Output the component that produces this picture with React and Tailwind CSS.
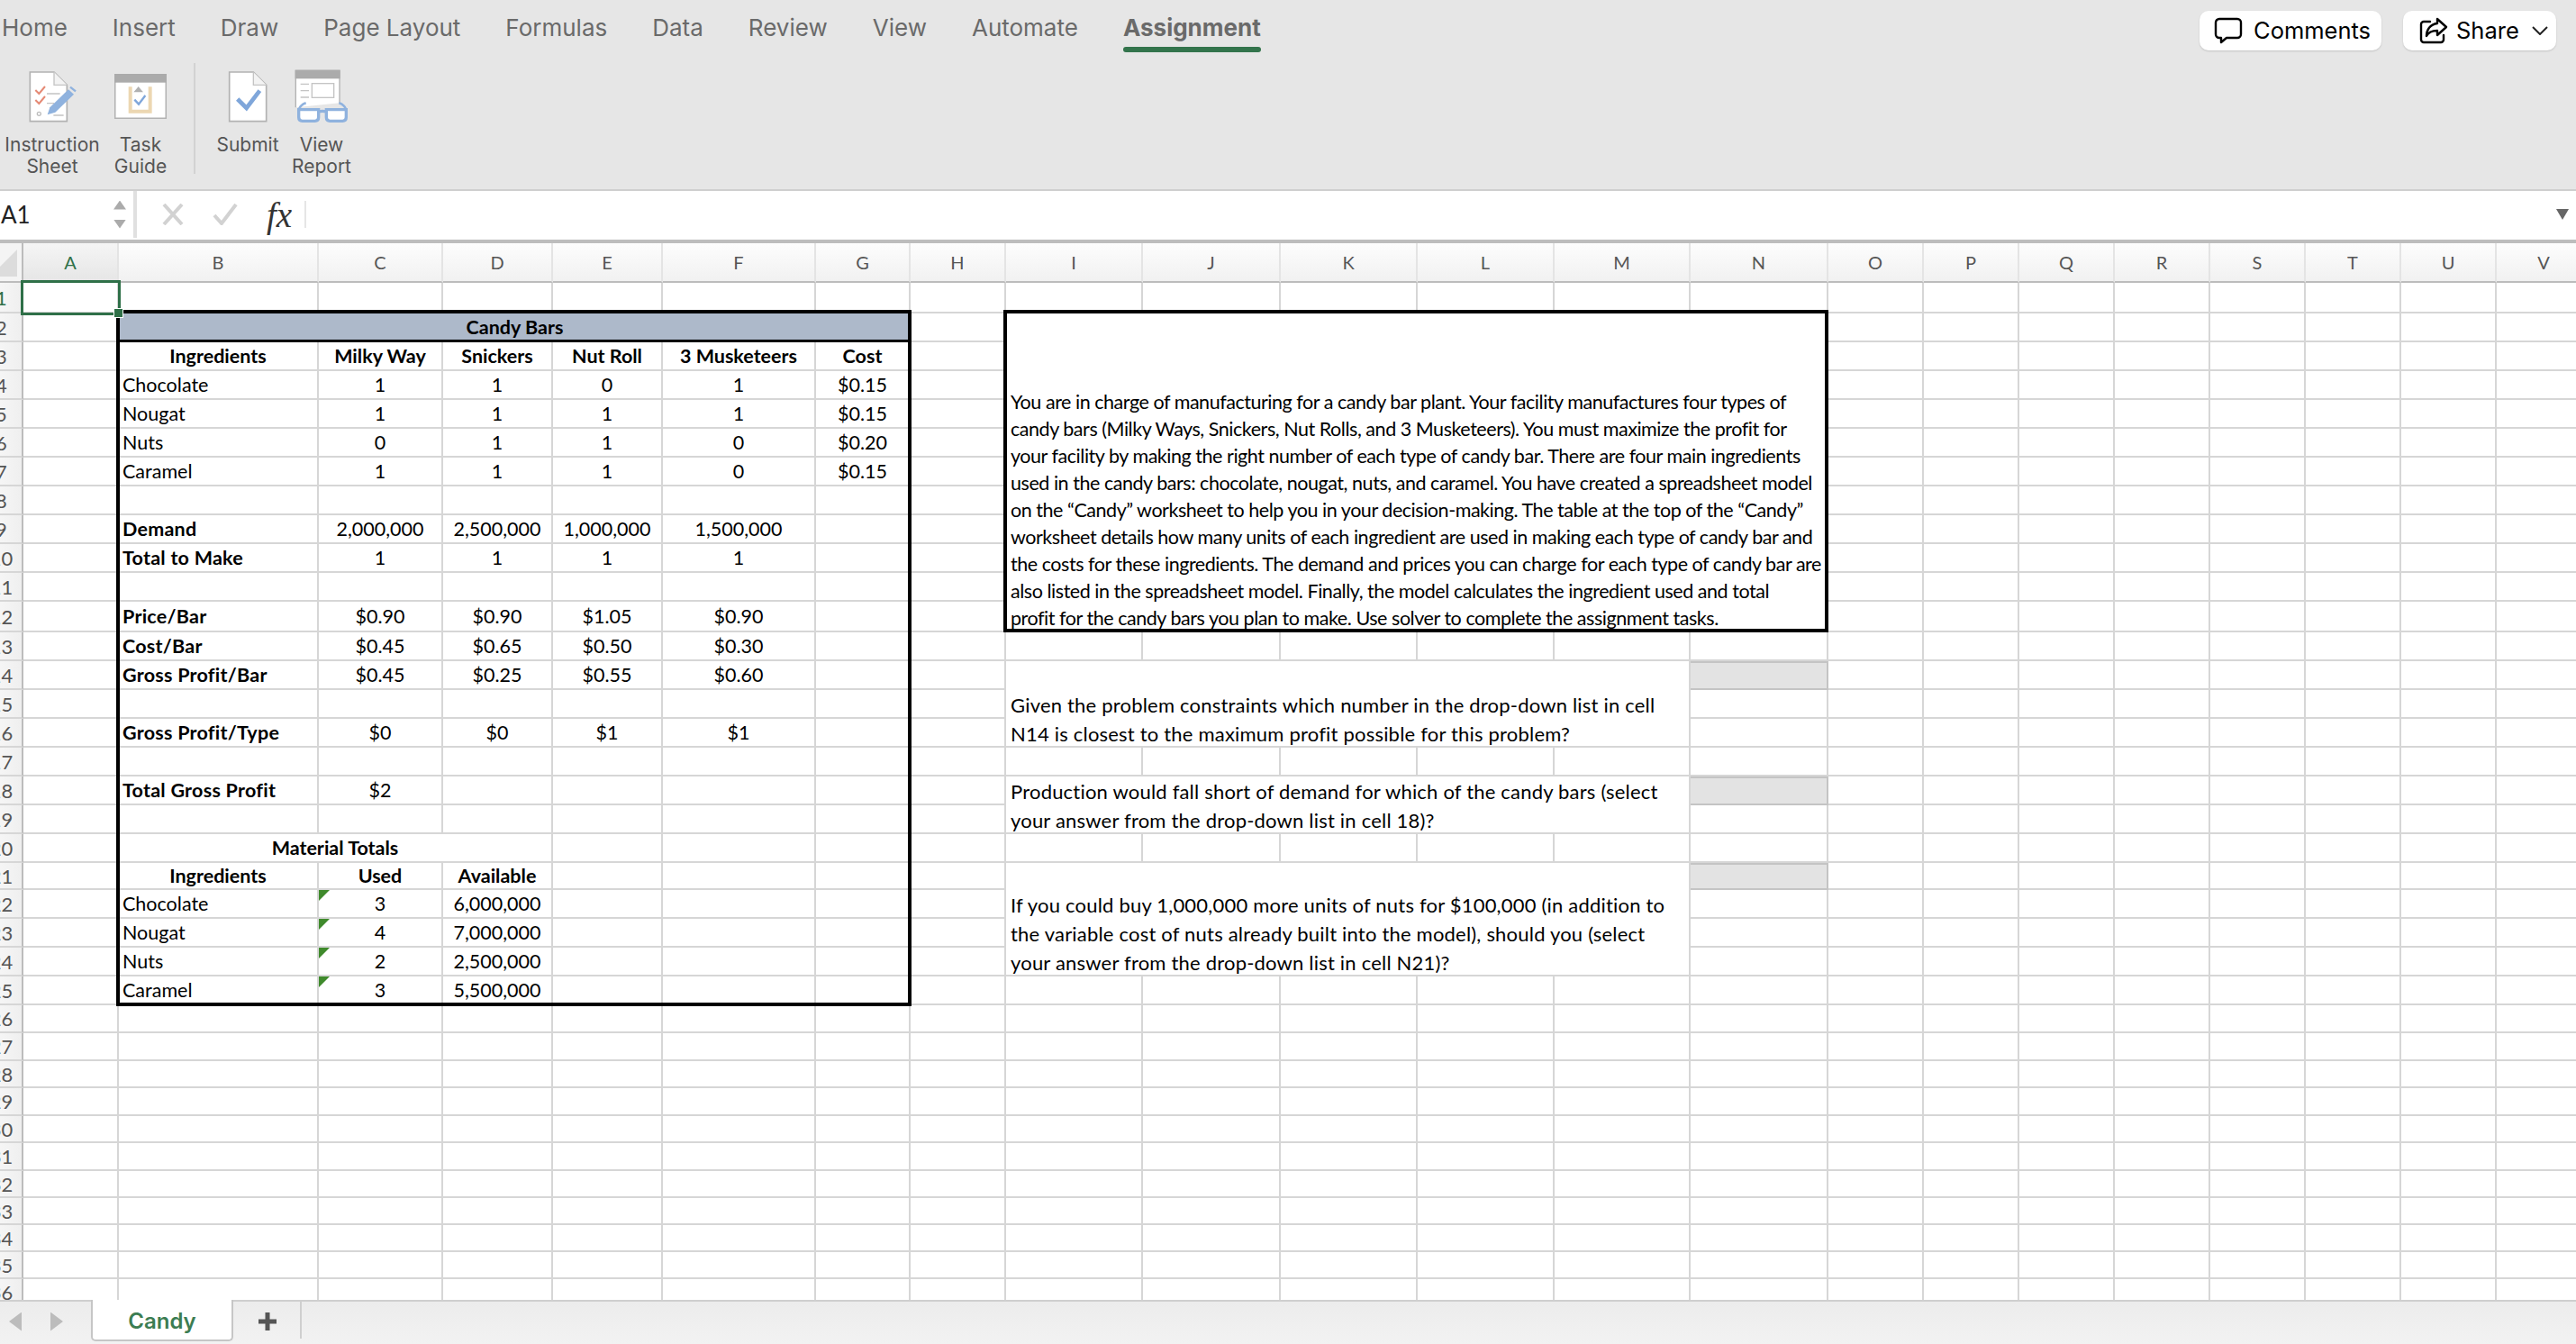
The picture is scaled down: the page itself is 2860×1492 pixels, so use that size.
import React from "react";

const cellFont = "font-['Lato',sans-serif]";
const uiFont = "font-['Inter',sans-serif]";

// column widths and row heights measured off the sheet
const sheetGrid =
  "grid grid-cols-[47px_106px_222px_138px_122px_122px_170px_105px_106px_152px_153px_152px_152px_151px_153px_106px_106px_106px_106px_106px_106px_106px_106px] grid-rows-[44px_34px_repeat(10,32px)_34px_repeat(8,32px)_30px_repeat(4,32px)_31px_31px_30px_31px_30px_31px_repeat(5,30px)]";

const columns = ["A", "B", "C", "D", "E", "F", "G", "H", "I", "J", "K", "L", "M", "N", "O", "P", "Q", "R", "S", "T", "U", "V"];

const tabs = ["Home", "Insert", "Draw", "Page Layout", "Formulas", "Data", "Review", "View", "Automate"];

const tableRows = {
  3: { head: true, cells: ["Ingredients", "Milky Way", "Snickers", "Nut Roll", "3 Musketeers", "Cost"] },
  4: { cells: ["Chocolate", "1", "1", "0", "1", "$0.15"] },
  5: { cells: ["Nougat", "1", "1", "1", "1", "$0.15"] },
  6: { cells: ["Nuts", "0", "1", "1", "0", "$0.20"] },
  7: { cells: ["Caramel", "1", "1", "1", "0", "$0.15"] },
  9: { bold: true, cells: ["Demand", "2,000,000", "2,500,000", "1,000,000", "1,500,000"] },
  10: { bold: true, cells: ["Total to Make", "1", "1", "1", "1"] },
  12: { bold: true, cells: ["Price/Bar", "$0.90", "$0.90", "$1.05", "$0.90"] },
  13: { bold: true, cells: ["Cost/Bar", "$0.45", "$0.65", "$0.50", "$0.30"] },
  14: { bold: true, cells: ["Gross Profit/Bar", "$0.45", "$0.25", "$0.55", "$0.60"] },
  16: { bold: true, cells: ["Gross Profit/Type", "$0", "$0", "$1", "$1"] },
  18: { bold: true, cells: ["Total Gross Profit", "$2"] },
  21: { head: true, cells: ["Ingredients", "Used", "Available"] },
  22: { flag: true, cells: ["Chocolate", "3", "6,000,000"] },
  23: { flag: true, cells: ["Nougat", "4", "7,000,000"] },
  24: { flag: true, cells: ["Nuts", "2", "2,500,000"] },
  25: { flag: true, cells: ["Caramel", "3", "5,500,000"] },
};

const infoLines = [
  "You are in charge of manufacturing for a candy bar plant. Your facility manufactures four types of",
  "candy bars (Milky Ways, Snickers, Nut Rolls, and 3 Musketeers). You must maximize the profit for",
  "your facility by making the right number of each type of candy bar. There are four main ingredients",
  "used in the candy bars: chocolate, nougat, nuts, and caramel. You have created a spreadsheet model",
  "on the “Candy” worksheet to help you in your decision-making. The table at the top of the “Candy”",
  "worksheet details how many units of each ingredient are used in making each type of candy bar and",
  "the costs for these ingredients. The demand and prices you can charge for each type of candy bar are",
  "also listed in the spreadsheet model. Finally, the model calculates the ingredient used and total",
  "profit for the candy bars you plan to make. Use solver to complete the assignment tasks.",
];

const InstructionIcon = () => (
  <svg width="56" height="58" viewBox="100 56 168 174" fill="none">
    <path d="M110 62H190L233 105V226H110Z" fill="#fff" stroke="#b2b2b2" strokeWidth="5" />
    <path d="M190 62V105H233" fill="#f3f3f3" stroke="#c4c4c4" strokeWidth="4" />
    <path d="M128 122l12 12 20-24M128 155l12 12 20-24" stroke="#e58a75" strokeWidth="6" />
    <path d="M166 134H210M166 166H190M188 206H222" stroke="#c4c4c4" strokeWidth="4" />
    <circle cx="140" cy="201" r="6" stroke="#bdbdbd" strokeWidth="4" />
    <path d="M168 204l8-24 62-60 18 16-62 60z" fill="#8fb2de" />
    <path d="M244 112l18 14" stroke="#8fb2de" strokeWidth="7" />
  </svg>
);

const TaskIcon = () => (
  <svg width="58" height="50" viewBox="388 72 174 150" fill="none">
    <rect x="390" y="74" width="170" height="146" fill="#fff" stroke="#b2b2b2" strokeWidth="5" />
    <rect x="388" y="72" width="174" height="29" fill="#ababab" />
    <path d="M435 115h12v76h54v-76h12v88h-78z" fill="#ecd7b2" />
    <path d="M452 133l8-9 8-10 8 10 8 9z" fill="#b0b0b0" />
    <path d="M455 158l14 15 22-29" stroke="#7fa6da" strokeWidth="7" />
  </svg>
);

const SubmitIcon = () => (
  <svg width="44" height="58" viewBox="755 56 132 174" fill="none">
    <path d="M760 62H840L883 105V226H760Z" fill="#fff" stroke="#b2b2b2" strokeWidth="5" />
    <path d="M840 62V105H883" fill="#f3f3f3" stroke="#c4c4c4" strokeWidth="4" />
    <path d="M787 152l30 30 44-58" stroke="#7fa6da" strokeWidth="14" />
  </svg>
);

const ReportIcon = () => (
  <svg width="60" height="60" viewBox="988 58 180 180" fill="none">
    <path d="M992 185V62H1138V170" fill="#fff" stroke="#b2b2b2" strokeWidth="4" />
    <rect x="990" y="60" width="150" height="29" fill="#ababab" />
    <rect x="1046" y="105" width="73" height="47" stroke="#c4c4c4" strokeWidth="4" />
    <path d="M1008 107H1036M1008 129H1036M1008 151H1036" stroke="#c4c4c4" strokeWidth="4" />
    <path d="M1002 192h66v26q0 12-12 12h-42q-12 0-12-12zM1094 192h66v26q0 12-12 12h-42q-12 0-12-12zM1068 200q13-6 26 0" fill="#fff" stroke="#8fb2de" strokeWidth="10" />
    <path d="M1002 192q6-16 24-22M1160 192q-6-16-24-22" stroke="#8fb2de" strokeWidth="8" />
  </svg>
);

const RibbonButton = ({ icon, lines, width }) => (
  <div className={`flex flex-col items-center ${width}`}>
    <div className="h-[62px] flex items-center justify-center">{icon}</div>
    <div className="mt-[11px] text-center text-[21px] leading-6 text-[#555] whitespace-nowrap">
      {lines.map(l => <div key={l}>{l}</div>)}
    </div>
  </div>
);

const Ribbon = () => (
  <div className={`${uiFont} h-[212px] shrink-0 bg-[#e6e6e6] border-b-2 border-[#cfcfcf] flex flex-col`}>
    <div className="h-[78px] flex items-start justify-between pr-[22px]">
      <div className="flex gap-[50px] pl-[2px] pt-[15px] text-[26px] leading-8 text-[#6a6a6a]">
        {tabs.map(t => <span key={t} className="whitespace-nowrap">{t}</span>)}
        <span className="relative font-bold whitespace-nowrap">
          Assignment
          <span className="absolute left-0 right-0 top-[37px] h-[6px] rounded-full bg-[#33744c]" />
        </span>
      </div>
      <div className="flex gap-[24px] pt-[12px] text-[25.5px] text-black">
        <div className="h-[44px] w-[202px] rounded-[10px] bg-white shadow-[0_1px_2px_rgba(0,0,0,0.15)] flex items-center pl-[16px] gap-[12px]">
          <svg width="32" height="30" viewBox="0 0 32 30" fill="none" stroke="#000" strokeWidth="2.4">
            <path d="M6 2h20a4 4 0 0 1 4 4v13a4 4 0 0 1-4 4H14l-6 5v-5H6a4 4 0 0 1-4-4V6a4 4 0 0 1 4-4z" strokeLinejoin="round" />
          </svg>
          <span>Comments</span>
        </div>
        <div className="h-[44px] w-[170px] rounded-[10px] bg-white shadow-[0_1px_2px_rgba(0,0,0,0.15)] flex items-center pl-[18px]">
          <svg width="32" height="30" viewBox="0 0 32 30" fill="none" stroke="#000" strokeWidth="2.4" strokeLinejoin="round" strokeLinecap="round">
            <path d="M12 5H5a3 3 0 0 0-3 3v17a3 3 0 0 0 3 3h19a3 3 0 0 0 3-3v-5" />
            <path d="M20 2l10 9-10 9v-5c-6 0-10 2-12 6 0-7 4-13 12-14z" />
          </svg>
          <span className="ml-[9px]">Share</span>
          <svg className="ml-[14px]" width="18" height="10" viewBox="0 0 18 10" fill="none" stroke="#222" strokeWidth="2">
            <path d="M1 1l8 8 8-8" />
          </svg>
        </div>
      </div>
    </div>
    <div className="flex items-start -mt-[2px]">
      <RibbonButton width="w-[116px]" icon={<InstructionIcon />} lines={["Instruction", "Sheet"]} />
      <RibbonButton width="w-[80px]" icon={<TaskIcon />} lines={["Task", "Guide"]} />
      <div className="ml-[19px] -mt-[6px] w-[2px] h-[123px] bg-[#d2d2d2]" />
      <RibbonButton width="w-[80px] ml-[18px]" icon={<SubmitIcon />} lines={["Submit"]} />
      <RibbonButton width="w-[84px]" icon={<ReportIcon />} lines={["View", "Report"]} />
    </div>
  </div>
);

const FormulaBar = () => (
  <div className="h-[58px] shrink-0 bg-white flex border-b-[2px] border-[#bdbdbd]">
    <div className="flex flex-1 border-b-[2px] border-[#bdbdbd] pb-[2px]">
      <div className="w-[148px] flex items-center justify-between pr-[8px]">
        <span className={`${cellFont} pl-[1px] text-[26px] text-[#222]`}>A1</span>
        <div className="flex flex-col gap-[11px]">
          <div className="w-[14px] h-[10px] bg-[#ababab] [clip-path:polygon(50%_0,100%_100%,0_100%)]" />
          <div className="w-[14px] h-[10px] bg-[#ababab] [clip-path:polygon(0_0,100%_0,50%_100%)]" />
        </div>
      </div>
      <div className="w-[4px] bg-[#e0e0e0]" />
      <div className="ml-[28px] flex items-center gap-[32px]">
        <svg width="24" height="24" viewBox="0 0 24 24" stroke="#d2d2d2" strokeWidth="4" fill="none">
          <path d="M2 1l20 22M22 1L2 23" />
        </svg>
        <svg width="28" height="24" viewBox="0 0 28 24" stroke="#d2d2d2" strokeWidth="4" fill="none">
          <path d="M2 13l8 9L26 1" />
        </svg>
      </div>
      <span className="ml-[32px] self-center font-['Liberation_Serif',serif] italic text-[39px] leading-none text-[#333]">fx</span>
      <div className="ml-[14px] mt-[11px] w-[2px] h-[30px] bg-[#e6e6e6]" />
      <div className="flex-1" />
      <div className="self-center mr-[8px] w-[14px] h-[12px] bg-[#666] [clip-path:polygon(0_0,100%_0,50%_100%)]" />
    </div>
  </div>
);

const RowHeaderCell = ({ r }) => {
  const active = r === 1;
  return (
    <div className={`${cellFont} flex items-center justify-center overflow-hidden border-r-2 border-r-[#bcbcbc] border-b-2 border-b-[#d6d6d6] bg-linear-to-r from-[#fbfbfb] to-[#efefef] text-[22px] ${active ? "text-[#2f7048]" : "text-[#555]"}`}>
      {r}
    </div>
  );
};

const ColHeaderCell = ({ c }) => {
  const active = c === "A";
  return (
    <div className={`${cellFont} flex items-center justify-center border-r-2 border-r-[#e4e4e4] border-b-2 border-b-[#bcbcbc] bg-linear-to-b text-[20px] ${active ? "from-[#f5f5f5] to-[#e6e6e6] text-[#2f7048]" : "from-[#fdfdfd] to-[#f1f1f1] text-[#555]"}`}>
      {c}
    </div>
  );
};

const DataCell = ({ r, col }) => {
  const row = tableRows[r];
  const idx = col - 1; // B is the first column of the table
  const text = row && idx >= 0 ? row.cells[idx] : null;
  const isLabel = idx === 0;
  const bold = row && (row.head || (row.bold && isLabel));
  const spaced = row && row.bold && isLabel;
  return (
    <div className={`relative flex items-center pt-[1px] overflow-visible whitespace-nowrap border-r-2 border-b-2 border-[#d6d6d6] bg-white text-[21.5px] text-black ${isLabel && !(row && row.head) ? "justify-start pl-[4px]" : "justify-center"} ${bold ? "font-bold" : ""} ${spaced ? "tracking-[0.25px]" : ""}`}>
      {row && row.flag && col === 2 && (
        <span className="absolute left-0 top-0 w-[12px] h-[12px] bg-[#3f8a2c] [clip-path:polygon(0_0,100%_0,0_100%)]" />
      )}
      {text}
    </div>
  );
};

const Question = ({ className, lines }) => (
  <div className={`col-start-10 col-span-5 bg-white border-r-2 border-b-2 border-[#d6d6d6] flex flex-col justify-end pl-[5px] text-[22px] tracking-[0.2px] leading-8 text-black whitespace-nowrap ${className}`}>
    <div className="translate-y-[3px]">
      {lines.map(l => <div key={l}>{l}</div>)}
    </div>
  </div>
);

const Sheet = () => {
  const rows = Array.from({ length: 36 }, (_, i) => i + 1);
  return (
    <div className={`${cellFont} flex-1 overflow-hidden -ml-[21px] grid grid-cols-[max-content] grid-rows-[max-content]`}>
      <div className={`${sheetGrid} col-start-1 row-start-1`}>
        <div className="relative overflow-hidden border-r-2 border-r-[#bcbcbc] border-b-2 border-b-[#bcbcbc] bg-[#f4f4f4] flex items-end justify-end pr-[5px] pb-[5px]">
          <div className="w-[30px] h-[30px] bg-[#dcdcdc] [clip-path:polygon(100%_0,100%_100%,0_100%)]" />
        </div>
        {columns.map(c => <ColHeaderCell key={c} c={c} />)}
        {rows.map(r => (
          <React.Fragment key={r}>
            <RowHeaderCell r={r} />
            {columns.map((c, i) => <DataCell key={c} r={r} col={i} />)}
          </React.Fragment>
        ))}
      </div>

      {/* merged cells, table frame and selection sit on the same tracks */}
      <div className={`${sheetGrid} relative col-start-1 row-start-1 pointer-events-none`}>
        <div className="col-start-3 col-span-6 row-start-3 pt-[2px] bg-[#adb9ca] border-b-[3px] border-black flex items-center justify-center font-bold text-[21.5px] text-black">Candy Bars</div>
        <div className="col-start-3 col-span-3 row-start-21 pt-[1px] bg-white border-r-2 border-b-2 border-[#d6d6d6] flex items-center justify-center font-bold text-[21.5px] text-black">Material Totals</div>
        <div className="col-start-3 col-span-6 row-start-3 row-span-24 -ml-[3px] -mt-[4px] -mr-px -mb-px border-4 border-black" />

        <div className="col-start-10 col-span-6 row-start-3 row-span-11 -ml-[3px] -mt-[4px] border-4 border-black bg-white flex flex-col justify-end pl-[4px] text-[21.5px] leading-[30px] tracking-[-0.46px] text-black whitespace-nowrap overflow-hidden">
          <div className="translate-y-[3px]">
            {infoLines.map(l => <div key={l}>{l}</div>)}
          </div>
        </div>

        <Question
          className="row-start-15 row-span-3"
          lines={[
            "Given the problem constraints which number in the drop-down list in cell",
            "N14 is closest to the maximum profit possible for this problem?",
          ]}
        />
        <Question
          className="row-start-19 row-span-2"
          lines={[
            "Production would fall short of demand for which of the candy bars (select",
            "your answer from the drop-down list in cell 18)?",
          ]}
        />
        <Question
          className="row-start-22 row-span-4"
          lines={[
            "If you could buy 1,000,000 more units of nuts for $100,000 (in addition to",
            "the variable cost of nuts already built into the model), should you (select",
            "your answer from the drop-down list in cell N21)?",
          ]}
        />

        <div className="col-start-15 row-start-15 bg-[#e3e3e3] border-t-2 border-r-2 border-b-2 border-[#c4c4c4]" />
        <div className="col-start-15 row-start-19 bg-[#e3e3e3] border-t-2 border-r-2 border-b-2 border-[#c4c4c4]" />
        <div className="col-start-15 row-start-22 bg-[#e3e3e3] border-t-2 border-r-2 border-b-2 border-[#c4c4c4]" />

        <div className="relative col-start-2 row-start-2 -ml-[3px] -mt-[3px] mb-[-2px] -mr-[2px] border-[3px] border-[#2f7048]">
          <span className="absolute -right-[6px] -bottom-[6px] w-[11px] h-[11px] bg-[#2f7048] border border-white" />
        </div>
      </div>
    </div>
  );
};

const SheetTabs = () => (
  <div className={`${uiFont} relative h-[49px] shrink-0 flex items-start bg-linear-to-b from-[#ececec] to-[#f2f2f2] border-t-2 border-[#cfcfcf]`}>
    <div className="w-[101px] h-[44px] flex items-center pl-[10px] gap-[32px]">
      <div className="w-[14px] h-[21px] bg-[#bcbcbc] [clip-path:polygon(100%_0,100%_100%,0_50%)]" />
      <div className="w-[14px] h-[21px] bg-[#bcbcbc] [clip-path:polygon(0_0,100%_50%,0_100%)]" />
    </div>
    <div className="-mt-[2px] w-[158px] h-[46px] pt-[4px] flex items-center justify-center rounded-b-[5px] bg-white border-x-2 border-b-2 border-[#c6c6c6] border-t-0 font-semibold text-[24px] text-[#3c7d52]">Candy</div>
    <div className="w-[76px] h-[41px] pt-[2px] pl-[2px] flex items-center justify-center border-r-2 border-[#cfcfcf]">
      <svg width="20" height="20" viewBox="0 0 20 20" stroke="#555" strokeWidth="5"><path d="M10 0v20M0 10h20" /></svg>
    </div>
  </div>
);

export default function App() {
  return (
    <div className="w-[2860px] h-[1492px] overflow-hidden flex flex-col bg-white">
      <Ribbon />
      <FormulaBar />
      <Sheet />
      <SheetTabs />
    </div>
  );
}
